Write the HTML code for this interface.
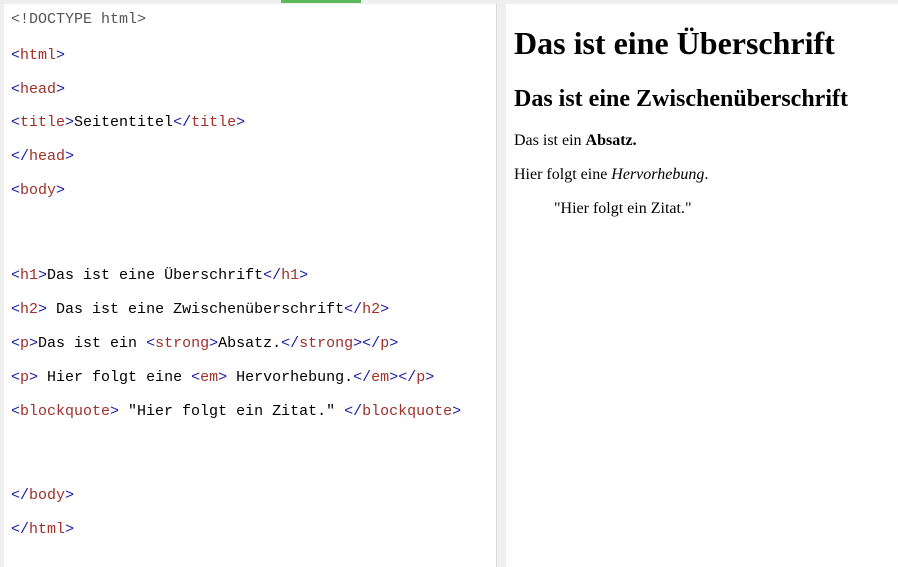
<!DOCTYPE html>
<html><head><style>
body{margin:0;width:898px;height:567px;background:#efefef;position:relative;overflow:hidden}
#green{position:absolute;left:281px;top:0;width:80px;height:3px;background:#5cb85c}
#left{position:absolute;left:4px;top:4px;width:492px;height:563px;background:#fff;border-right:1px solid #d8d8d8}
#right{position:absolute;left:506px;top:4px;width:392px;height:563px;background:#fff}
.l{position:absolute;left:11px;font-family:"Liberation Mono",monospace;font-size:15px;line-height:18px;white-space:pre;color:#000}
.b{color:#1a1aa6}.n{color:#a0302a}.d{color:#555}
.r{position:absolute;left:514px;font-family:"Liberation Serif",serif;white-space:nowrap;color:#000}
</style></head><body>
<div id="green"></div>
<div id="left"></div>
<div id="right"></div>
<div class="l d" style="top:11px">&lt;!DOCTYPE html&gt;</div>
<div class="l" style="top:47px"><span class="b">&lt;</span><span class="n">html</span><span class="b">&gt;</span></div>
<div class="l" style="top:81px"><span class="b">&lt;</span><span class="n">head</span><span class="b">&gt;</span></div>
<div class="l" style="top:114px"><span class="b">&lt;</span><span class="n">title</span><span class="b">&gt;</span>Seitentitel<span class="b">&lt;/</span><span class="n">title</span><span class="b">&gt;</span></div>
<div class="l" style="top:148px"><span class="b">&lt;/</span><span class="n">head</span><span class="b">&gt;</span></div>
<div class="l" style="top:182px"><span class="b">&lt;</span><span class="n">body</span><span class="b">&gt;</span></div>
<div class="l" style="top:267px"><span class="b">&lt;</span><span class="n">h1</span><span class="b">&gt;</span>Das ist eine Überschrift<span class="b">&lt;/</span><span class="n">h1</span><span class="b">&gt;</span></div>
<div class="l" style="top:301px"><span class="b">&lt;</span><span class="n">h2</span><span class="b">&gt;</span> Das ist eine Zwischenüberschrift<span class="b">&lt;/</span><span class="n">h2</span><span class="b">&gt;</span></div>
<div class="l" style="top:335px"><span class="b">&lt;</span><span class="n">p</span><span class="b">&gt;</span>Das ist ein <span class="b">&lt;</span><span class="n">strong</span><span class="b">&gt;</span>Absatz.<span class="b">&lt;/</span><span class="n">strong</span><span class="b">&gt;&lt;/</span><span class="n">p</span><span class="b">&gt;</span></div>
<div class="l" style="top:369px"><span class="b">&lt;</span><span class="n">p</span><span class="b">&gt;</span> Hier folgt eine <span class="b">&lt;</span><span class="n">em</span><span class="b">&gt;</span> Hervorhebung.<span class="b">&lt;/</span><span class="n">em</span><span class="b">&gt;&lt;/</span><span class="n">p</span><span class="b">&gt;</span></div>
<div class="l" style="top:403px"><span class="b">&lt;</span><span class="n">blockquote</span><span class="b">&gt;</span> "Hier folgt ein Zitat." <span class="b">&lt;/</span><span class="n">blockquote</span><span class="b">&gt;</span></div>
<div class="l" style="top:487px"><span class="b">&lt;/</span><span class="n">body</span><span class="b">&gt;</span></div>
<div class="l" style="top:521px"><span class="b">&lt;/</span><span class="n">html</span><span class="b">&gt;</span></div>
<div class="r" style="top:25px;font-size:32px;font-weight:bold;line-height:37px">Das ist eine Überschrift</div>
<div class="r" style="top:85px;font-size:24px;font-weight:bold;line-height:28px">Das ist eine Zwischenüberschrift</div>
<div class="r" style="top:132px;font-size:16px;line-height:18px">Das ist ein <b>Absatz.</b></div>
<div class="r" style="top:166px;font-size:16px;line-height:18px">Hier folgt eine <i>Hervorhebung</i>.</div>
<div class="r" style="top:200px;left:554px;font-size:16px;line-height:18px">"Hier folgt ein Zitat."</div>
</body></html>
